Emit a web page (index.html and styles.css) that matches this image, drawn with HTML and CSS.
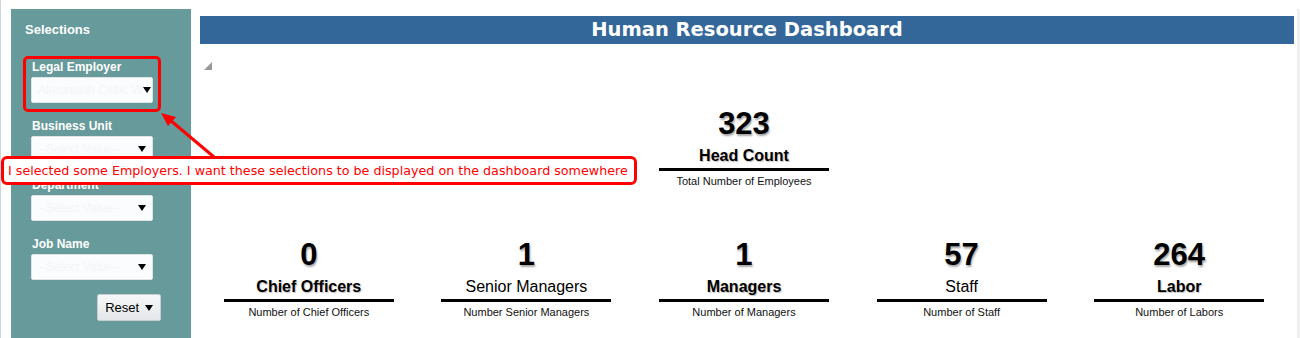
FILE: index.html
```html
<!DOCTYPE html>
<html lang="en">
<head>
  <meta charset="UTF-8">
  <title>Human Resource Dashboard</title>
  <link rel="stylesheet" href="styles.css">
</head>
<body>
<div class="page">
  <aside class="sidebar">
    <h3 class="sidebar-title">Selections</h3>
    <div class="fields">
      <div class="field">
        <label>Legal Employer</label>
        <div class="select"><span class="select-text">Almunajah Celtic W</span><span class="caret"></span></div>
      </div>
      <div class="field">
        <label>Business Unit</label>
        <div class="select"><span class="select-text">--Select Value--</span><span class="caret"></span></div>
      </div>
      <div class="field">
        <label>Department</label>
        <div class="select"><span class="select-text">--Select Value--</span><span class="caret"></span></div>
      </div>
      <div class="field">
        <label>Job Name</label>
        <div class="select"><span class="select-text">--Select Value--</span><span class="caret"></span></div>
      </div>
    </div>
    <div class="reset-row">
      <button class="reset-btn">Reset <span class="reset-caret"></span></button>
    </div>
  </aside>

  <main class="main">
    <h1 class="title-bar">Human Resource Dashboard</h1>
    <div class="grip"></div>

    <div class="headcount">
      <div class="kpi">
        <div class="kpi-value">323</div>
        <div class="kpi-label bold">Head Count</div>
        <div class="kpi-sub">Total Number of Employees</div>
      </div>
    </div>

    <div class="kpi-row">
      <div class="kpi">
        <div class="kpi-value">0</div>
        <div class="kpi-label bold">Chief Officers</div>
        <div class="kpi-sub">Number of Chief Officers</div>
      </div>
      <div class="kpi">
        <div class="kpi-value">1</div>
        <div class="kpi-label">Senior Managers</div>
        <div class="kpi-sub">Number Senior Managers</div>
      </div>
      <div class="kpi">
        <div class="kpi-value">1</div>
        <div class="kpi-label bold">Managers</div>
        <div class="kpi-sub">Number of Managers</div>
      </div>
      <div class="kpi">
        <div class="kpi-value">57</div>
        <div class="kpi-label">Staff</div>
        <div class="kpi-sub">Number of Staff</div>
      </div>
      <div class="kpi">
        <div class="kpi-value">264</div>
        <div class="kpi-label bold">Labor</div>
        <div class="kpi-sub">Number of Labors</div>
      </div>
    </div>
  </main>

  <div class="scroll-edge"></div>
</div>

<!-- annotation drawn over the screenshot -->
<div class="note-box"></div>
<svg class="note-arrow" width="230" height="170" viewBox="0 0 230 170">
  <line x1="214" y1="157" x2="170" y2="120" stroke="#ff0000" stroke-width="3"/>
  <polygon points="161,113 176,117 168,126" fill="#ff0000"/>
</svg>
<div class="note-callout">I selected some Employers. I want these selections to be displayed on the dashboard somewhere</div>
</body>
</html>
```

FILE: styles.css
```css
body {
  font-family: "Liberation Sans", Arial, sans-serif;
  margin: 0;
  background-color: #fff;
  border-left: 1px solid #ccd5e4;
  height: 338px;
  overflow: hidden;
}
.page {
  display: flex;
  height: 100%;
}
.sidebar {
  width: 180px;
  margin: 9px 0 0 10px;
  padding: 13px 0 0 14px;
  box-sizing: border-box;
  background-color: #679a9a;
  color: #fff;
}
.sidebar-title {
  margin: 0 0 22px 0;
  font-size: 13px;
  line-height: 16px;
  font-weight: bold;
}
.fields {
  padding-left: 6px;
}
.field {
  margin-bottom: 16px;
}
.field label {
  display: block;
  padding-left: 1px;
  font-size: 12px;
  line-height: 14px;
  font-weight: bold;
  margin-bottom: 3px;
}
.select {
  width: 122px;
  height: 26px;
  box-sizing: border-box;
  background-color: #fbfcfd;
  border: 1px solid #dfe4e9;
  border-radius: 2px;
  display: flex;
  align-items: center;
  justify-content: space-between;
  padding: 0 6px 0 6px;
}
.select-text {
  font-size: 12px;
  color: #f3f6f9;
  white-space: nowrap;
}
.caret {
  width: 0;
  height: 0;
  border-left: 4px solid transparent;
  border-right: 4px solid transparent;
  border-top: 6px solid #000;
  flex-shrink: 0;
}
.reset-row {
  display: flex;
  justify-content: flex-end;
  padding-right: 30px;
  margin-top: -2px;
}
.reset-btn {
  width: 64px;
  height: 27px;
  padding: 0;
  font-family: "Liberation Sans", Arial, sans-serif;
  font-size: 13px;
  color: #000;
  background: linear-gradient(#f6f7f8, #e4e7ea);
  border: 1px solid #c9ced3;
  border-radius: 2px;
}
.reset-caret {
  display: inline-block;
  width: 0;
  height: 0;
  border-left: 4px solid transparent;
  border-right: 4px solid transparent;
  border-top: 6px solid #000;
  margin-left: 2px;
  vertical-align: 1px;
}

.main {
  flex: 1;
  margin-left: 9px;
  padding-top: 16px;
}
.title-bar {
  margin: 0;
  height: 28px;
  line-height: 28px;
  background-color: #346799;
  color: #fff;
  text-align: center;
  font-family: "DejaVu Sans", sans-serif;
  font-size: 19.5px;
  font-weight: bold;
}
.grip {
  width: 0;
  height: 0;
  margin: 18px 0 0 4px;
  border-bottom: 8px solid #999;
  border-left: 8px solid transparent;
}
.headcount {
  display: flex;
  justify-content: center;
  margin-top: 36px;
  padding-right: 6px;
}
.kpi-row {
  display: grid;
  grid-template-columns: repeat(5, 1fr);
  margin-top: 49px;
  margin-right: 6px;
}
.kpi {
  display: flex;
  flex-direction: column;
  align-items: center;
}
.kpi-value {
  font-size: 31px;
  line-height: 36px;
  font-weight: bold;
  color: #000;
  text-shadow: 1px 2px 2px rgba(0, 0, 0, 0.35);
}
.kpi-label {
  width: 170px;
  margin-top: 4px;
  padding-bottom: 2px;
  border-bottom: 3px solid #000;
  text-align: center;
  font-size: 16px;
  line-height: 20px;
  color: #000;
}
.kpi-label.bold {
  font-weight: bold;
  text-shadow: 1px 1px 1px rgba(0, 0, 0, 0.25);
}
.kpi-sub {
  margin-top: 3px;
  font-size: 11px;
  line-height: 14px;
  color: #111;
}
.scroll-edge {
  width: 3px;
  margin: 9px 0 0 3px;
  background-color: #efefef;
}

/* annotation layer */
.note-box {
  position: absolute;
  left: 23px;
  top: 56px;
  width: 138px;
  height: 56px;
  box-sizing: border-box;
  border: 3px solid #ff0000;
  border-radius: 5px;
}
.note-arrow {
  position: absolute;
  left: 0;
  top: 0;
}
.note-callout {
  position: absolute;
  left: 1px;
  top: 156px;
  width: 636px;
  height: 29px;
  box-sizing: border-box;
  padding-left: 4px;
  border: 3px solid #ff0000;
  border-radius: 6px;
  background-color: #fff;
  color: #ff0000;
  font-family: "DejaVu Sans", Verdana, sans-serif;
  font-size: 12.7px;
  line-height: 24px;
  white-space: nowrap;
}
```
